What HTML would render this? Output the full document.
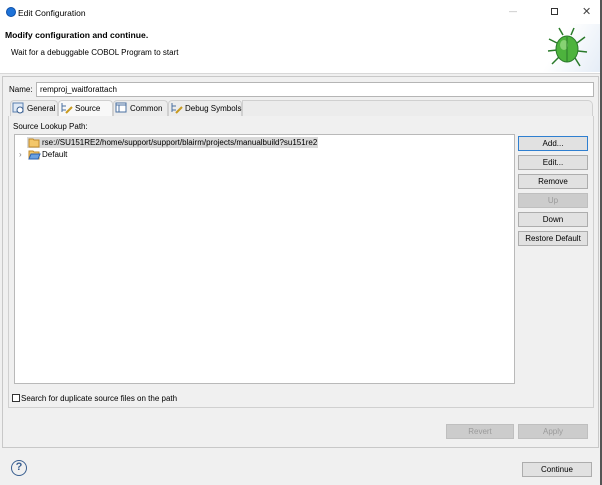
<!DOCTYPE html>
<html><head><meta charset="utf-8"><style>
*{box-sizing:border-box;margin:0;padding:0}
body{width:602px;height:485px;overflow:hidden;background:#f0f0f0;font-family:"Liberation Sans",sans-serif;font-size:8px;color:#000;position:relative}
.a{position:absolute;white-space:nowrap}
.btn{position:absolute;background:#e1e1e1;border:1px solid #adadad;text-align:center;line-height:13px;font-size:8px;white-space:nowrap}
.dis{background:#cccccc;border-color:#bfbfbf;color:#9a9a9a}
.tab{position:absolute;top:100px;height:16px;line-height:15px;border:1px solid #d0d0d0;border-bottom:none;border-radius:4px 4px 0 0;background:#ececec;padding-left:16px;white-space:nowrap;font-size:8px}
</style></head><body>
<div class="a" style="left:0;top:0;width:602px;height:73px;background:#fff"></div>
<div class="a" style="left:6px;top:7px;width:10px;height:10px;border-radius:50%;background:#1e73d8;border:1px solid #0d4fa8"></div>
<div class="a" style="left:18px;top:8px;font-size:8.5px">Edit Configuration</div>
<div class="a" style="left:509px;top:7px;color:#aaa">—</div>
<div class="a" style="left:551px;top:8px;width:7px;height:7px;border:1px solid #333"></div>
<div class="a" style="left:582px;top:5px;font-size:11px;color:#444">✕</div>
<div class="a" style="left:5px;top:30px;font-weight:bold;font-size:8.6px">Modify configuration and continue.</div>
<div class="a" style="left:11px;top:48px">Wait for a debuggable COBOL Program to start</div>
<div class="a" style="left:530px;top:24px;width:72px;height:48px;background:linear-gradient(120deg,#fff 40%,#e4ecf6)"></div>
<svg class="a" style="left:545px;top:25px" width="45" height="45" viewBox="0 0 45 45">
<g stroke="#2a7a2a" stroke-width="1.5" fill="none"><path d="M12 18 L4 14 M12 25 L3 26 M14 32 L7 39 M32 18 L40 12 M33 26 L42 27 M30 33 L35 41 M18 10 L14 3 M26 10 L29 3"/></g>
<ellipse cx="22" cy="24" rx="11" ry="13" fill="#4db33d" stroke="#2a7a2a"/>
<ellipse cx="19" cy="20" rx="4" ry="5" fill="#9fe08a" opacity=".7"/>
<path d="M22 12 L22 37" stroke="#2a7a2a"/>
</svg>
<div class="a" style="left:0;top:73px;width:602px;height:1px;background:#d8d8d8"></div>
<div class="a" style="left:2px;top:76px;width:597px;height:372px;border:1px solid #c8c8c8"></div>
<div class="a" style="left:600px;top:0;width:2px;height:485px;background:#555"></div>
<div class="a" style="left:9px;top:85px">Name:</div>
<div class="a" style="left:36px;top:82px;width:558px;height:15px;background:#fff;border:1px solid #b5b5b5;padding-left:3px;line-height:13px">remproj_waitforattach</div>
<div class="tab" style="left:10px;width:48px">General</div>
<div class="tab" style="left:58px;width:55px;background:#f8f8f8;height:17px">Source</div>
<div class="tab" style="left:113px;width:55px">Common</div>
<div class="tab" style="left:168px;width:74px">Debug Symbols</div>
<div class="a" style="left:242px;top:100px;width:351px;height:16px;border:1px solid #d0d0d0;border-bottom:none;border-radius:0 5px 0 0;background:#ececec"></div>
<svg class="a" style="left:12px;top:102px" width="12" height="12"><rect x="1" y="1" width="10" height="9" fill="#dfe9f5" stroke="#5a7fb0"/><circle cx="8" cy="8" r="3" fill="#fff" stroke="#3a5f90"/></svg>
<svg class="a" style="left:60px;top:102px" width="14" height="12"><path d="M2 1v9M2 4h4M2 8h4" stroke="#4a6fa0" fill="none"/><path d="M6 11l6-6" stroke="#c89a20" stroke-width="2"/></svg>
<svg class="a" style="left:115px;top:102px" width="12" height="12"><rect x="1" y="1" width="10" height="9" fill="#fff" stroke="#4a6fa0"/><path d="M1 3h10M4 3v7" stroke="#4a6fa0"/></svg>
<svg class="a" style="left:170px;top:102px" width="14" height="12"><path d="M2 1v9M2 4h4M2 8h4" stroke="#4a6fa0" fill="none"/><path d="M6 11l6-6" stroke="#c89a20" stroke-width="2"/></svg>
<div class="a" style="left:8px;top:116px;width:586px;height:292px;background:#f0f0f0;border:1px solid #d0d0d0;border-top:none"></div>
<div class="a" style="left:13px;top:122px">Source Lookup Path:</div>
<div class="a" style="left:14px;top:134px;width:501px;height:250px;background:#fff;border:1px solid #b9b9b9"></div>
<div class="a" style="left:27px;top:137px;width:291px;height:11px;background:#d9d9d9"></div>
<svg class="a" style="left:28px;top:137px" width="13" height="11"><path d="M1 2h4l1 1h5v7H1z" fill="#f3c76a" stroke="#c08a2a"/></svg>
<div class="a" style="left:42px;top:137px;line-height:11px">rse://SU151RE2/home/support/support/blairm/projects/manualbuild?su151re2</div>
<div class="a" style="left:19px;top:150px;color:#777">›</div>
<svg class="a" style="left:28px;top:149px" width="13" height="11"><path d="M1 2h4l1 1h5v7H1z" fill="#f3c76a" stroke="#c08a2a"/><path d="M3 5h9l-2 5H1z" fill="#6aa0e0" stroke="#2a60b0"/></svg>
<div class="a" style="left:42px;top:150px">Default</div>
<div class="btn" style="left:518px;top:136px;width:70px;height:15px;border-color:#2f7fd0">Add...</div>
<div class="btn" style="left:518px;top:155px;width:70px;height:15px">Edit...</div>
<div class="btn" style="left:518px;top:174px;width:70px;height:15px">Remove</div>
<div class="btn dis" style="left:518px;top:193px;width:70px;height:15px">Up</div>
<div class="btn" style="left:518px;top:212px;width:70px;height:15px">Down</div>
<div class="btn" style="left:518px;top:231px;width:70px;height:15px">Restore Default</div>
<div class="a" style="left:12px;top:394px;width:8px;height:8px;border:1px solid #333;background:#fff"></div>
<div class="a" style="left:21px;top:394px">Search for duplicate source files on the path</div>
<div class="btn dis" style="left:446px;top:424px;width:68px;height:15px">Revert</div>
<div class="btn dis" style="left:518px;top:424px;width:70px;height:15px">Apply</div>
<div class="a" style="left:11px;top:460px;width:16px;height:16px;border:1.5px solid #3a5f90;border-radius:50%;text-align:center;line-height:13px;font-weight:bold;font-size:11px;color:#3a5f90">?</div>
<div class="btn" style="left:522px;top:462px;width:70px;height:15px">Continue</div>
</body></html>
